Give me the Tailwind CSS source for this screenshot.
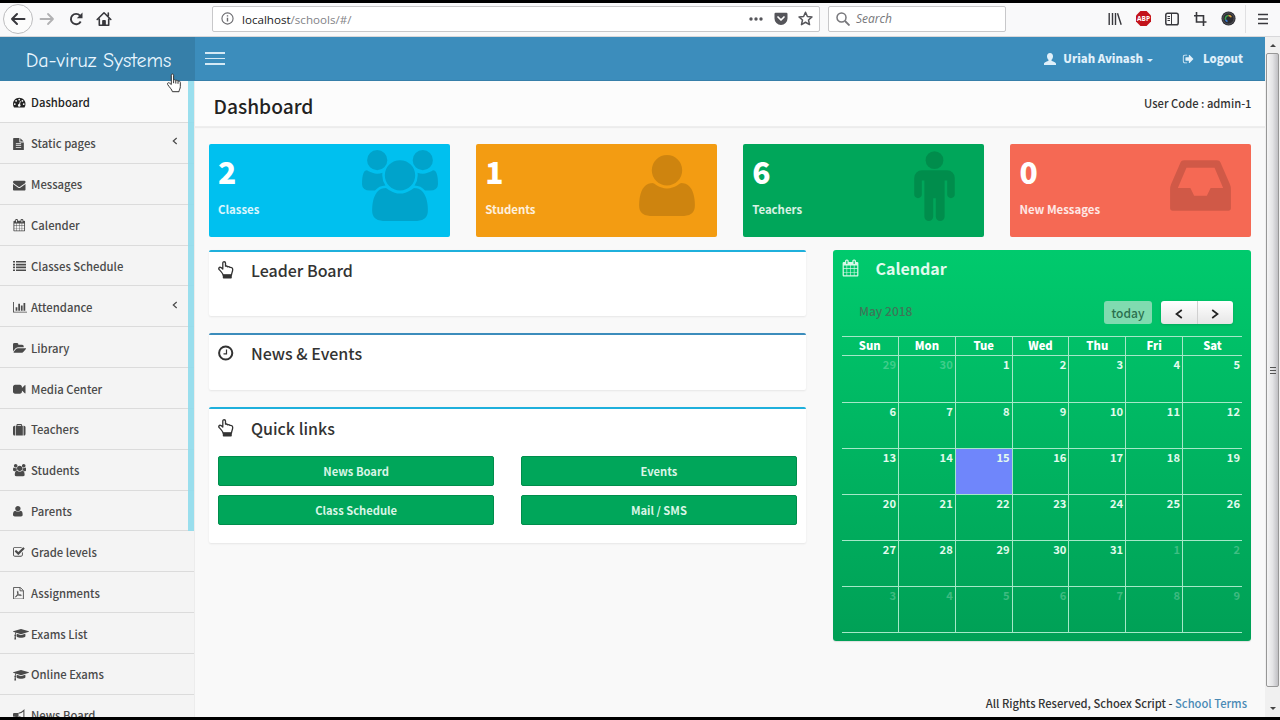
<!doctype html>
<html lang="en">
  <head>
    <meta charset="UTF-8" />
    <meta name="viewport" content="width=device-width, initial-scale=1.0" />
    <script src="https://cdn.jsdelivr.net/npm/@tailwindcss/browser@4"></script>
    <title>Da-viruz Systems | Dashboard</title>
  </head>
  <body class="bg-black">
    <!-- icons used more than once -->
    <svg class="hidden">
      <symbol id="i-calendar" viewBox="0 0 1792 1792">
        <path d="M192 1664h288v-288h-288v288zm352 0h320v-288h-320v288zm-352-352h288v-320h-288v320zm352 0h320v-320h-320v320zm-352-384h288v-288h-288v288zm736 736h320v-288h-320v288zm-384-736h320v-288h-320v288zm768 736h288v-288h-288v288zm-384-352h320v-320h-320v320zm-352-864v-288q0-13-9.5-22.5t-22.5-9.5h-64q-13 0-22.5 9.5t-9.5 22.5v288q0 13 9.5 22.5t22.5 9.5h64q13 0 22.5-9.5t9.5-22.5zm736 864h288v-320h-288v320zm-384-384h320v-288h-320v288zm384 0h288v-288h-288v288zm32-480v-288q0-13-9.5-22.5t-22.5-9.5h-64q-13 0-22.5 9.5t-9.5 22.5v288q0 13 9.5 22.5t22.5 9.5h64q13 0 22.5-9.5t9.5-22.5zm384-64v1280q0 52-38 90t-90 38h-1408q-52 0-90-38t-38-90v-1280q0-52 38-90t90-38h128v-96q0-66 47-113t113-47h64q66 0 113 47t47 113v96h384v-96q0-66 47-113t113-47h64q66 0 113 47t47 113v96h128q52 0 90 38t38 90z" />
      </symbol>
      <symbol id="i-users" viewBox="0 0 1920 1792">
        <path d="M593 896q-162 5-265 128h-134q-82 0-138-40.5t-56-118.5q0-353 124-353 6 0 43.5 21t97.5 42.5 119 21.5q67 0 133-23-5 37-5 66 0 139 81 256zm1071 637q0 120-73 189.5t-194 69.5h-874q-121 0-194-69.5t-73-189.5q0-53 3.5-103.5t14-109 26.5-108.5 43-97.5 62-81 85.5-53.5 111.5-20q10 0 43 21.5t73 48 107 48 135 21.5 135-21.5 107-48 73-48 43-21.5q61 0 111.5 20t85.5 53.5 62 81 43 97.5 26.5 108.5 14 109 3.5 103.5zm-1024-1277q0 106-75 181t-181 75-181-75-75-181 75-181 181-75 181 75 75 181zm704 384q0 159-112.5 271.5t-271.5 112.5-271.5-112.5-112.5-271.5 112.5-271.5 271.5-112.5 271.5 112.5 112.5 271.5zm576 225q0 78-56 118.5t-138 40.5h-134q-103-123-265-128 81-117 81-256 0-29-5-66 66 23 133 23 59 0 119-21.5t97.5-42.5 43.5-21q124 0 124 353zm-128-609q0 106-75 181t-181 75-181-75-75-181 75-181 181-75 181 75 75 181z" />
      </symbol>
      <symbol id="i-user" viewBox="192 0 1408 1792">
        <path d="M1600 1405q0 120-73 189.5t-194 69.5h-874q-121 0-194-69.5t-73-189.5q0-53 3.5-103.5t14-109 26.5-108.5 43-97.5 62-81 85.5-53.5 111.5-20q9 0 42 21.5t74.5 48 108 48 133.5 21.5 133.5-21.5 108-48 74.5-48 42-21.5q61 0 111.5 20t85.5 53.5 62 81 43 97.5 26.5 108.5 14 109 3.5 103.5zm-320-893q0 159-112.5 271.5t-271.5 112.5-271.5-112.5-112.5-271.5 112.5-271.5 271.5-112.5 271.5 112.5 112.5 271.5z" />
      </symbol>
      <symbol id="i-cap" viewBox="0 0 2304 1792">
        <path d="M1774 836l18 316q4 69-82 128t-235 93.5-323 34.5-323-34.5-235-93.5-82-128l18-316 574 181q22 7 48 7t48-7zm530-324q0 23-22 31l-1120 352q-4 1-10 1t-10-1l-652-206q-43 34-71 111.5t-34 178.5q63 36 63 109 0 69-58 107l58 433q2 14-8 25-9 11-24 11h-192q-15 0-24-11-10-11-8-25l58-433q-58-38-58-107 0-73 65-111 11-207 98-330l-333-104q-22-8-22-31t22-31l1120-352q4-1 10-1t10 1l1120 352q22 8 22 31z" />
      </symbol>
      <symbol id="i-hand" viewBox="0 0 16 18">
        <path d="M5 14c0-1.600-2.600-4.100-3.800-5.400C.2 7.500 1.200 6 2.500 6.300c.9.200 1.600.9 2.300 1.700V2c0-1.700 2.700-1.700 2.700 0v3.200c.8-.3 1.700-.1 2.200.6.800-.4 1.700-.2 2.200.6 1.600-.3 2.800.5 2.800 2.100 0 2.300-1.100 3.500-1.200 5.500z" fill="none" stroke="currentColor" stroke-width="1.300" stroke-linejoin="round" />
        <path d="M4.800 13.800h9v3a.8.8 0 0 1-.8.800H5.600a.8.8 0 0 1-.8-.8z" />
      </symbol>
    </svg>

    <div
      class="relative flex flex-col w-[1280px] h-[720px] border-y-3 border-black overflow-hidden bg-[#f9f9f9] font-['Noto_Sans_CJK_SC','Open_Sans',sans-serif]"
    >
      <!-- browser toolbar -->
      <div
        class="flex items-center h-[34px] shrink-0 bg-[#f9f9fa] border-b border-[#d8d8da] pb-[2px] text-[#4a4a4f] font-['Open_Sans',sans-serif]"
      >
        <div class="flex items-center justify-center w-[30px] h-[30px] ml-[3px] rounded-full border border-[#bdbdbf] bg-[#fcfcfc]">
          <svg class="w-4 h-4" viewBox="0 0 16 16" fill="none" stroke="#38383d" stroke-width="2" stroke-linecap="round" stroke-linejoin="round"><path d="M14.500 8H2M7 3L2 8l5 5" /></svg>
        </div>
        <svg class="w-4 h-4 ml-[6px]" viewBox="0 0 16 16" fill="none" stroke="#b1b1b3" stroke-width="1.800" stroke-linecap="round" stroke-linejoin="round"><path d="M1.500 8H14M9 3l5 5-5 5" /></svg>
        <svg class="w-4 h-4 ml-[13px]" viewBox="0 0 16 16" fill="none" stroke="#38383d" stroke-width="1.900"><path d="M12.700 10.500A5.200 5.200 0 1 1 12 4.600" /><path d="M14.500 1.500v5.700H8.800z" fill="#38383d" stroke="none" /></svg>
        <svg class="w-4 h-4 ml-[12px]" viewBox="0 0 16 16" fill="none" stroke="#38383d" stroke-width="1.600" stroke-linejoin="round" stroke-linecap="round"><path d="M1.200 8.500L8 1.800l6.800 6.700M3.300 8v6.200h9.400V8M12.300 2v3" /><path d="M6.700 14V9.500h2.600V14z" fill="#38383d" stroke-width="1" /></svg>

        <div class="flex items-center w-[608px] h-[26px] ml-[100px] border border-[#c8c8ca] rounded-[2px] bg-white">
          <svg class="w-[13px] h-[13px] ml-2" viewBox="0 0 14 14" fill="none" stroke="#6a6a6e" stroke-width="1.200"><circle cx="7" cy="7" r="6" /><path d="M7 6.200v4M7 3.500v1.400" stroke-width="1.500" /></svg>
          <p class="ml-[8px] pt-[2px] text-[11.600px] text-[#1c1c1e]">localhost<span class="text-[#838387]">/schools/#/</span></p>
          <svg class="w-[14px] h-1 ml-auto" viewBox="0 0 14 4" fill="#55555a"><circle cx="2" cy="2" r="1.700" /><circle cx="7" cy="2" r="1.700" /><circle cx="12" cy="2" r="1.700" /></svg>
          <svg class="w-[14px] h-[14px] ml-[11px]" viewBox="0 0 14 14"><path d="M1.600.8h10.800q1.100 0 1.100 1.100v4.600a6.500 6.500 0 0 1-13 0V1.900Q.5.800 1.600.800z" fill="#55555a" /><path d="M4 5l3 3 3-3" fill="none" stroke="#fff" stroke-width="1.700" stroke-linecap="round" stroke-linejoin="round" /></svg>
          <svg class="w-[15px] h-[15px] ml-[10px] mr-[6px]" viewBox="0 0 16 16" fill="none" stroke="#55555a" stroke-width="1.600" stroke-linejoin="round"><path d="M8 1.300l2 4.500 4.900.5-3.700 3.300 1.100 4.900L8 12l-4.300 2.500 1.100-4.900L1.100 6.300 6 5.800z" /></svg>
        </div>
        <div class="flex items-center w-[178px] h-[26px] ml-2 border border-[#c8c8ca] rounded-[2px] bg-white">
          <svg class="w-[14px] h-[14px] ml-[7px]" viewBox="0 0 14 14" fill="none" stroke="#77777b" stroke-width="1.500"><circle cx="5.500" cy="5.500" r="4.500" /><path d="M9 9l4.500 4.500" stroke-width="1.800" /></svg>
          <p class="ml-[6px] pt-px text-[12px] italic text-[#77777b]">Search</p>
        </div>

        <svg class="w-[14px] h-[14px] ml-auto" viewBox="0 0 14 14" fill="none" stroke="#38383d" stroke-width="1.400"><path d="M1.200 1v12M4.500 1v12M7.500 1v12M9.500 1.200l3.700 11.600" /></svg>
        <svg class="w-[15px] h-[15px] ml-[14px]" viewBox="0 0 16 16"><path d="M4.700 0h6.600L16 4.700v6.600L11.300 16H4.700L0 11.300V4.700z" fill="#c3131b" /><text x="8" y="10.600" font-size="7" font-weight="700" text-anchor="middle" fill="#fff">ABP</text></svg>
        <svg class="w-[14px] h-[14px] ml-[14px]" viewBox="0 0 14 14" fill="none" stroke="#38383d"><rect x=".8" y="1.300" width="12.400" height="11.400" rx="1.800" stroke-width="1.500" /><path d="M6.500 1.500v11M2.500 4.500H5M2.500 6.500H5M2.500 8.500H5" /></svg>
        <svg class="w-[14px] h-[14px] ml-[14px]" viewBox="0 0 14 14" fill="none" stroke="#38383d" stroke-width="1.600"><path d="M3.500 0v10h8M1 3.800h9.500V14M9 10h4.500" /></svg>
        <svg class="w-[15px] h-[15px] ml-[14px]" viewBox="0 0 16 16" fill="none"><circle cx="8" cy="8" r="7.500" fill="#2b2b30" /><circle cx="8" cy="8" r="6" stroke="#5a5a60" /><path d="M5 9.500A3.400 3.400 0 0 1 8 4.700" stroke="#3aa24d" stroke-width="1.600" /><path d="M8 4.700a3.400 3.400 0 0 1 3 2" stroke="#d9a13a" stroke-width="1.600" /><path d="M5 9.500a3.400 3.400 0 0 0 2 1.700" stroke="#3b7dd8" stroke-width="1.600" /></svg>
        <div class="w-px h-7 ml-[9px] bg-[#e0e0e2]"></div>
        <svg class="w-[12px] h-[12px] ml-[11px] mr-[11px]" viewBox="0 0 12 12" stroke="#38383d" stroke-width="1.600"><path d="M1 1.500h10M1 6h10M1 10.500h10" /></svg>
      </div>

      <div class="flex flex-1 min-h-0">
        <!-- page -->
        <div class="flex flex-col w-[1265px]">
          <header class="flex h-[44px] shrink-0 bg-[#3c8dbc] border-b border-[#367fa9] text-[#e0f0fa]">
            <a class="w-[195px] flex items-center justify-center bg-[#367fa9] pt-[4px] pl-[2px] text-[20px] leading-6 whitespace-nowrap font-['Comic_Sans_MS','Comic_Neue',Lato,cursive] text-[#e9f6ff]">Da-viruz Systems</a>
            <div class="flex flex-col justify-center gap-1 ml-[10px]">
              <span class="block w-5 h-[1.500px] bg-[#d5e9f5]"></span>
              <span class="block w-5 h-[1.500px] bg-[#d5e9f5]"></span>
              <span class="block w-5 h-[1.500px] bg-[#d5e9f5]"></span>
            </div>
            <nav class="flex items-center ml-auto mr-[22px] text-[11.300px] font-black">
              <svg class="w-3 h-3 mr-[7px]" viewBox="0 0 12 12" fill="currentColor"><path d="M6 0c1.900 0 3 1.300 3 3.200 0 1.500-.6 2.900-1.500 3.600v1c1 .7 4.500 1.400 4.500 3V12H0v-1.200c0-1.600 3.500-2.300 4.500-3v-1C3.600 6.100 3 4.700 3 3.200 3 1.300 4.100 0 6 0z" /></svg>
              <span>Uriah Avinash</span>
              <span class="ml-1 mt-[3px] border-x-[3.500px] border-t-[3.500px] border-x-transparent border-t-current"></span>
              <svg class="w-[12px] h-[12px] ml-[29px] mr-[9px]" viewBox="0 0 1664 1792" fill="currentColor"><path d="M704 1440q0 4 1 20t.5 26.500-3 23.500-10 19.500-20.500 6.500h-320q-119 0-203.500-84.500t-84.500-203.500v-704q0-119 84.500-203.500t203.500-84.500h320q13 0 22.500 9.500t9.500 22.500q0 4 1 20t.5 26.500-3 23.500-10 19.500-20.500 6.500h-320q-66 0-113 47t-47 113v704q0 66 47 113t113 47h312l11.500 1 11.500 3 8 5.500 7 9 2 13.500zm928-544q0 26-19 45l-544 544q-19 19-45 19t-45-19-19-45v-288h-448q-26 0-45-19t-19-45v-384q0-26 19-45t45-19h448v-288q0-26 19-45t45-19 45 19l544 544q19 19 19 45z" /></svg>
              <span>Logout</span>
            </nav>
          </header>

          <div class="flex flex-1 min-h-0">
            <!-- sidebar -->
            <aside class="relative w-[195px] shrink-0 overflow-hidden border-r border-[#ececec] bg-[#f4f4f4] text-[11.300px] font-medium text-[#4a4a4a]">
              <a class="flex items-center h-[42px] pl-[13px] pt-[2px] bg-[#fafafa] border-b border-[#dbdbdb] text-[#222]">
                <span class="w-[18px]"><svg class="w-[12.500px] h-[12.500px] fill-current" viewBox="0 0 1792 1792"><path d="M384 1152q0-53-37.500-90.500t-90.500-37.500-90.500 37.500-37.500 90.500 37.500 90.500 90.500 37.500 90.500-37.500 37.500-90.500zm192-448q0-53-37.500-90.500t-90.500-37.500-90.500 37.500-37.500 90.500 37.500 90.500 90.500 37.500 90.500-37.500 37.500-90.500zm428 481l101-382q6-26-7.500-48.500t-38.500-29.500-48 6.500-30 39.500l-101 382q-60 5-107 43.500t-63 98.500q-20 77 20 146t117 89 146-20 89-117q16-60-6-117t-72-91zm660-33q0-53-37.500-90.500t-90.500-37.500-90.500 37.500-37.500 90.500 37.500 90.500 90.500 37.500 90.500-37.500 37.500-90.500zm-640-640q0-53-37.500-90.500t-90.500-37.500-90.500 37.500-37.500 90.500 37.500 90.500 90.500 37.500 90.500-37.500 37.500-90.500zm448 192q0-53-37.500-90.500t-90.500-37.500-90.500 37.500-37.500 90.500 37.500 90.500 90.500 37.500 90.500-37.500 37.500-90.500zm320 448q0 261-141 483-19 29-54 29h-1402q-35 0-54-29-141-221-141-483 0-182 71-348t191-286 286-191 348-71 348 71 286 191 191 286 71 348z" /></svg></span>
                Dashboard
              </a>
              <a class="flex items-center h-[40.850px] pl-[13px] pt-[2px] border-b border-[#dbdbdb]">
                <span class="w-[18px]"><svg class="w-[11px] h-[12.500px] fill-current" viewBox="128 0 1536 1792"><path d="M1596 476q14 14 28 36h-472v-472q22 14 36 28zm-476 164h544v1056q0 40-28 68t-68 28h-1344q-40 0-68-28t-28-68v-1600q0-40 28-68t68-28h800v544q0 40 28 68t68 28zm160 736v-64q0-14-9-23t-23-9h-704q-14 0-23 9t-9 23v64q0 14 9 23t23 9h704q14 0 23-9t9-23zm0-256v-64q0-14-9-23t-23-9h-704q-14 0-23 9t-9 23v64q0 14 9 23t23 9h704q14 0 23-9t9-23zm0-256v-64q0-14-9-23t-23-9h-704q-14 0-23 9t-9 23v64q0 14 9 23t23 9h704q14 0 23-9t9-23z" /></svg></span>
                Static pages
                <svg class="w-[6px] h-[8px] ml-auto mr-[16px] mb-[5px]" viewBox="0 0 6 8" fill="none" stroke="currentColor" stroke-width="1.200"><path d="M4.700 1L1.300 4l3.400 3" /></svg>
              </a>
              <a class="flex items-center h-[40.850px] pl-[13px] pt-[2px] border-b border-[#dbdbdb]">
                <span class="w-[18px]"><svg class="w-[12.500px] h-[12.500px] fill-current" viewBox="0 0 1792 1792"><path d="M1792 710v794q0 66-47 113t-113 47h-1472q-66 0-113-47t-47-113v-794q44 49 101 87 362 246 497 345 57 42 92.500 65.500t94.500 48 110 24.500h2q51 0 110-24.500t94.500-48 92.500-65.500q170-123 498-345 57-39 100-87zm0-294q0 79-49 151t-122 123q-376 261-468 325-10 7-42.500 31t-54 38-52 32.500-57.500 27-50 9h-2q-23 0-50-9t-57.500-27-52-32.500-54-38-42.500-31q-91-64-262-182.500t-205-142.500q-62-42-117-115.500t-55-136.500q0-78 41.500-130t118.500-52h1472q65 0 112.500 47t47.500 113z" /></svg></span>
                Messages
              </a>
              <a class="flex items-center h-[40.850px] pl-[13px] pt-[2px] border-b border-[#dbdbdb]">
                <span class="w-[18px]"><svg class="w-[12.500px] h-[12.500px] fill-current"><use href="#i-calendar" /></svg></span>
                Calender
              </a>
              <a class="flex items-center h-[40.850px] pl-[13px] pt-[2px] border-b border-[#dbdbdb]">
                <span class="w-[18px]"><svg class="w-[13px] h-[10px] fill-current" viewBox="0 0 13 10"><path d="M0 0h2v1.600H0zM3 0h10v1.600H3zM0 2.800h2v1.600H0zM3 2.800h10v1.600H3zM0 5.600h2v1.600H0zM3 5.600h10v1.600H3zM0 8.400h2V10H0zM3 8.400h10V10H3z" /></svg></span>
                Classes Schedule
              </a>
              <a class="flex items-center h-[40.850px] pl-[13px] pt-[2px] border-b border-[#dbdbdb]">
                <span class="w-[18px]"><svg class="w-[14px] h-[12.500px] fill-current" viewBox="0 0 2048 1792"><path d="M640 896v512h-256v-512h256zm384-512v1024h-256v-1024h256zm1024 1152v128h-2048v-1536h128v1408h1920zm-640-896v768h-256v-768h256zm384-384v1152h-256v-1152h256z" /></svg></span>
                Attendance
                <svg class="w-[6px] h-[8px] ml-auto mr-[16px] mb-[5px]" viewBox="0 0 6 8" fill="none" stroke="currentColor" stroke-width="1.200"><path d="M4.700 1L1.300 4l3.400 3" /></svg>
              </a>
              <a class="flex items-center h-[40.850px] pl-[13px] pt-[2px] border-b border-[#dbdbdb]">
                <span class="w-[18px]"><svg class="w-[13.400px] h-[12.500px] fill-current" viewBox="0 0 1920 1792"><path d="M1879 952q0 31-31 66l-336 396q-43 51-120.500 86.500t-143.500 35.500h-1088q-34 0-60.500-13t-26.500-43q0-31 31-66l336-396q43-51 120.500-86.500t143.500-35.500h1088q34 0 60.500 13t26.500 43zm-343-344v160h-832q-94 0-197 47.500t-164 119.500l-337 396-5 6q0-4-.5-12.500t-.5-12.500v-960q0-92 66-158t158-66h320q92 0 158 66t66 158v32h544q92 0 158 66t66 158z" /></svg></span>
                Library
              </a>
              <a class="flex items-center h-[40.850px] pl-[13px] pt-[2px] border-b border-[#dbdbdb]">
                <span class="w-[18px]"><svg class="w-[12.500px] h-[12.500px] fill-current" viewBox="0 0 1792 1792"><path d="M1792 352v1088q0 42-39 59-13 5-25 5-27 0-45-19l-403-403v166q0 119-84.500 203.500t-203.500 84.500h-704q-119 0-203.500-84.500t-84.500-203.500v-704q0-119 84.500-203.500t203.500-84.500h704q119 0 203.500 84.500t84.500 203.500v165l403-402q18-19 45-19 12 0 25 5 39 17 39 59z" /></svg></span>
                Media Center
              </a>
              <a class="flex items-center h-[40.850px] pl-[13px] pt-[2px] border-b border-[#dbdbdb]">
                <span class="w-[18px]"><svg class="w-[12.500px] h-[12.500px] fill-current" viewBox="0 0 1792 1792"><path d="M640 256h512v-128h-512v128zm-352 0v1408h-64q-92 0-158-66t-66-158v-960q0-92 66-158t158-66h64zm1120 0v1408h-1024v-1408h128v-160q0-40 28-68t68-28h576q40 0 68 28t28 68v160h128zm384 224v960q0 92-66 158t-158 66h-64v-1408h64q92 0 158 66t66 158z" /></svg></span>
                Teachers
              </a>
              <a class="flex items-center h-[40.850px] pl-[13px] pt-[2px] border-b border-[#dbdbdb]">
                <span class="w-[18px]"><svg class="w-[13.400px] h-[12.500px] fill-current"><use href="#i-users" /></svg></span>
                Students
              </a>
              <a class="flex items-center h-[40.850px] pl-[13px] pt-[2px] border-b border-[#dbdbdb]">
                <span class="w-[18px]"><svg class="w-[9.800px] h-[12.500px] fill-current"><use href="#i-user" /></svg></span>
                Parents
              </a>
              <a class="flex items-center h-[40.850px] pl-[13px] pt-[2px] border-b border-[#dbdbdb]">
                <span class="w-[18px]"><svg class="w-[12.500px] h-[12.500px] fill-current" viewBox="64 0 1792 1792"><path d="M1472 930v318q0 119-84.500 203.500t-203.500 84.500h-832q-119 0-203.500-84.500t-84.500-203.500v-832q0-119 84.500-203.500t203.500-84.500h832q63 0 117 25 15 7 18 23 3 17-9 29l-49 49q-10 10-23 10-3 0-9-2-23-6-45-6h-832q-66 0-113 47t-47 113v832q0 66 47 113t113 47h832q66 0 113-47t47-113v-254q0-13 9-22l64-64q10-10 23-10 6 0 12 3 20 8 20 29zm231-489l-814 814q-24 24-57 24t-57-24l-430-430q-24-24-24-57t24-57l110-110q24-24 57-24t57 24l263 263 647-647q24-24 57-24t57 24l110 110q24 24 24 57t-24 57z" /></svg></span>
                Grade levels
              </a>
              <a class="flex items-center h-[40.850px] pl-[13px] pt-[2px] border-b border-[#dbdbdb]">
                <span class="w-[18px]"><svg class="w-[11px] h-[12.500px]" viewBox="0 0 12 14" fill="none" stroke="currentColor" stroke-linejoin="round"><path d="M.5.500h7.500l3.500 3.500v9.500H.5zM7.700.700v3.600h3.600" /><path d="M2.500 11.300c1.500-.7 3-3.600 3-6 0-.8-.9-.8-.8.1.2 2 1.800 4 3.600 4.200 1.300.1 1.300-.9 0-.9-2.200 0-4.800 1-5.800 2.600z" /></svg></span>
                Assignments
              </a>
              <a class="flex items-center h-[40.850px] pl-[13px] pt-[2px] border-b border-[#dbdbdb]">
                <span class="w-[18px]"><svg class="w-[16px] h-[12.500px] fill-current"><use href="#i-cap" /></svg></span>
                Exams List
              </a>
              <a class="flex items-center h-[40.850px] pl-[13px] pt-[2px] border-b border-[#dbdbdb]">
                <span class="w-[18px]"><svg class="w-[16px] h-[12.500px] fill-current"><use href="#i-cap" /></svg></span>
                Online Exams
              </a>
              <a class="flex items-center h-[40.850px] pl-[13px]">
                <span class="w-[18px]"><svg class="w-[12.500px] h-[12.500px]" viewBox="0 0 14 14"><path d="M1.200 4.500h5v4.300h-1c-.3 1.300.4 2 .6 3.400-.8 1-2.300.7-2.800.3-.3-1.300-.8-2.300-.3-3.700H1.200Q0 8.800 0 7.700V5.600q0-1.100 1.200-1.100z" fill="currentColor" /><path d="M6.200 4.700C8.800 4.500 11 3 12.200 1.600v10.200C11 10.400 8.800 8.900 6.200 8.700" fill="none" stroke="currentColor" stroke-width="1.200" /></svg></span>
                News Board
              </a>
              <!-- slim scroll rail -->
              <div class="absolute top-0 right-0 w-[6px] h-[450px] bg-[#8fdcec]/90"></div>
            </aside>

            <!-- main content -->
            <main class="flex-1 flex flex-col bg-[#f9f9f9] text-[#333]">
              <div class="flex justify-between h-[46px] bg-[#fcfcfc] border-b border-[#eee] shadow-[0_1px_1px_rgba(0,0,0,0.05)] pl-[18.500px] pr-[13.500px] shrink-0">
                <h1 class="mt-[11px] text-[19.200px] leading-[28px] font-medium text-[#222]">Dashboard</h1>
                <p class="mt-[13px] text-[11.200px] leading-[18px] font-medium">User Code : admin-1</p>
              </div>

              <div class="grid grid-cols-4 gap-[26.500px] pl-[14px] pr-[14px] mt-[17px]">
                <div class="flex justify-between h-[93px] rounded-[2px] bg-[#00c0ef] pl-[9px] pr-[12px] text-white">
                  <div>
                    <h3 class="mt-[9px] text-[30px] leading-[36px] font-black">2</h3>
                    <p class="mt-[11px] text-[11.400px] leading-[18px] font-bold text-white/85">Classes</p>
                  </div>
                  <svg class="w-[76px] h-[71px] mt-[6px] fill-black/15"><use href="#i-users" /></svg>
                </div>
                <div class="flex justify-between h-[93px] rounded-[2px] bg-[#f39c12] pl-[9px] pr-[22px] text-white">
                  <div>
                    <h3 class="mt-[9px] text-[30px] leading-[36px] font-black">1</h3>
                    <p class="mt-[11px] text-[11.400px] leading-[18px] font-bold text-white/85">Students</p>
                  </div>
                  <svg class="w-[56px] h-[71px] mt-[6px] fill-black/15"><use href="#i-user" /></svg>
                </div>
                <div class="flex justify-between h-[93px] rounded-[2px] bg-[#00a65a] pl-[9px] pr-[29px] text-white">
                  <div>
                    <h3 class="mt-[9px] text-[30px] leading-[36px] font-black">6</h3>
                    <p class="mt-[11px] text-[11.400px] leading-[18px] font-bold text-white/85">Teachers</p>
                  </div>
                  <svg class="w-[41px] h-[71px] mt-[6px] fill-black/15" viewBox="384 0 1024 1792"><path d="M1408 704v416q0 40-28 68t-68 28-68-28-28-68v-352h-64v912q0 46-33 79t-79 33-79-33-33-79v-464h-64v464q0 46-33 79t-79 33-79-33-33-79v-912h-64v352q0 40-28 68t-68 28-68-28-28-68v-416q0-80 56-136t136-56h640q80 0 136 56t56 136z" /><circle cx="896" cy="256" r="224" /></svg>
                </div>
                <div class="flex justify-between h-[93px] rounded-[2px] bg-[#f56954] pl-[9px] pr-[20px] text-white">
                  <div>
                    <h3 class="mt-[9px] text-[30px] leading-[36px] font-black">0</h3>
                    <p class="mt-[11px] text-[11.400px] leading-[18px] font-bold text-white/85">New Messages</p>
                  </div>
                  <svg class="w-[61px] h-[71px] mt-[6px] fill-black/15" viewBox="128 0 1536 1792"><path d="M1151 960h316q-1-3-2.500-8.500t-2.500-7.500l-212-496h-708l-212 496q-1 3-2.500 8.500t-2.500 7.500h316l95 192h320zm513 30v482q0 26-19 45t-45 19h-1408q-26 0-45-19t-19-45v-482q0-62 25-123l238-552q10-25 36.500-42t52.500-17h832q26 0 52.500 17t36.500 42l238 552q25 61 25 123z" /></svg>
                </div>
              </div>

              <div class="flex items-start gap-[26.500px] pl-[14px] pr-[14px] mt-[13px]">
                <div class="w-[597px] text-[#333]">
                  <section class="h-[66px] rounded-[2px] bg-white border-t-2 border-[#1fb0dc] shadow-[0_1px_2px_rgba(0,0,0,0.08)]">
                    <div class="flex items-start pl-[9px]">
                      <svg class="w-4 h-[18px] mt-[9px] fill-current"><use href="#i-hand" /></svg>
                      <h3 class="ml-[17px] mt-[5px] text-[16px] leading-[26px] font-medium">Leader Board</h3>
                    </div>
                  </section>
                  <section class="h-[57px] mt-[17px] rounded-[2px] bg-white border-t-2 border-[#3c8dbc] shadow-[0_1px_2px_rgba(0,0,0,0.08)]">
                    <div class="flex items-start pl-[9px]">
                      <svg class="w-4 h-4 mt-[10px]" viewBox="0 0 16 16" fill="none" stroke="currentColor"><circle cx="7.700" cy="8" r="6.600" stroke-width="2" /><path d="M8.500 4.500v4.300H5.500" stroke-width="1.200" /></svg>
                      <h3 class="ml-[17px] mt-[5px] text-[16px] leading-[26px] font-medium">News &amp; Events</h3>
                    </div>
                  </section>
                  <section class="h-[136px] mt-[17px] rounded-[2px] bg-white border-t-2 border-[#1fb0dc] shadow-[0_1px_2px_rgba(0,0,0,0.08)]">
                    <div class="flex items-start pl-[9px]">
                      <svg class="w-4 h-[18px] mt-[10px] fill-current"><use href="#i-hand" /></svg>
                      <h3 class="ml-[17px] mt-[6px] text-[16px] leading-[26px] font-medium">Quick links</h3>
                    </div>
                    <div class="grid grid-cols-2 gap-x-[26.500px] gap-y-[9px] px-[9px] mt-[15px] text-[11.200px] font-bold text-[#d9f5e6]">
                      <a class="flex items-center justify-center h-[30px] pt-px rounded-[2px] bg-[#00a65a] border border-[#008d4c]">News Board</a>
                      <a class="flex items-center justify-center h-[30px] pt-px rounded-[2px] bg-[#00a65a] border border-[#008d4c]">Events</a>
                      <a class="flex items-center justify-center h-[30px] pt-px rounded-[2px] bg-[#00a65a] border border-[#008d4c]">Class Schedule</a>
                      <a class="flex items-center justify-center h-[30px] pt-px rounded-[2px] bg-[#00a65a] border border-[#008d4c]">Mail / SMS</a>
                    </div>
                  </section>
                </div>

                <!-- calendar -->
                <section class="flex-1 h-[391px] rounded-[3px] bg-linear-to-b from-[#00ca6d] to-[#00a056] px-[9px] text-white shadow-[0_1px_1px_rgba(0,0,0,0.1)]">
                  <div class="flex items-start h-[50px]">
                    <svg class="w-[17px] h-[18px] mt-[9px] fill-[#d9f8e8]"><use href="#i-calendar" /></svg>
                    <h3 class="ml-[17px] mt-[5px] text-[16px] leading-[26px] font-bold text-[#e2faee]">Calendar</h3>
                  </div>
                  <div class="flex items-start h-[36px] pl-[17.500px] pr-[9px]">
                    <h2 class="mt-[2px] text-[12px] leading-[18px] font-medium text-[#3f7558]">May 2018</h2>
                    <div class="flex items-center justify-center w-[48px] h-[23px] ml-auto mt-[1px] rounded-[3px] bg-[#80dbb0] text-[12px] font-medium text-[#2b6f4e]">today</div>
                    <div class="flex w-[72px] h-[23px] ml-[9px] mt-[1px] rounded-[3px] bg-linear-to-b from-white to-[#e6e6e6] shadow-sm">
                      <span class="flex-1 flex items-center justify-center pt-[2px] border-r border-[#d0d0d0]"><svg class="w-[8px] h-[10px]" viewBox="0 0 8 10" fill="none" stroke="#222" stroke-width="1.700"><path d="M6.800 1L1.500 5l5.300 4" /></svg></span>
                      <span class="flex-1 flex items-center justify-center pt-[2px]"><svg class="w-[8px] h-[10px]" viewBox="0 0 8 10" fill="none" stroke="#222" stroke-width="1.700"><path d="M1.200 1l5.300 4-5.300 4" /></svg></span>
                    </div>
                  </div>
                  <div class="grid grid-cols-[57.5px_repeat(5,56.8px)_1fr] border-t border-[#a5e8c8] text-[11.200px] leading-[17px] font-black text-center" id="week-days"></div>
                  <div class="grid grid-cols-[57.5px_repeat(5,56.8px)_1fr] border-b border-[#a5e8c8] text-[11.200px] leading-[17px] font-bold text-right" id="month-days"></div>
                </section>
              </div>

              <footer class="mt-auto mb-[5px] pr-[18px] text-right text-[11.200px] leading-[18px] font-medium">
                All Rights Reserved, Schoex Script - <a class="text-[#4a8ab5]">School Terms</a>
              </footer>
            </main>
          </div>
        </div>

        <!-- page scrollbar -->
        <div class="flex flex-col items-center w-[15px] bg-[#f0f0f0]">
          <div class="flex items-center justify-center h-[16px]">
            <span class="border-x-[3px] border-b-[3px] border-x-transparent border-b-[#444]"></span>
          </div>
          <div class="flex flex-col items-center justify-center gap-px w-[13px] h-[634px] border border-[#979797] rounded-[2px] bg-linear-to-r from-[#f5f5f5] via-[#e4e4e6] to-[#c0c0c4]">
            <span class="block w-[6px] h-px bg-[#555]"></span>
            <span class="block w-[6px] h-px mt-px bg-[#555]"></span>
            <span class="block w-[6px] h-px mt-px bg-[#555]"></span>
          </div>
          <div class="flex items-center justify-center flex-1 pt-3">
            <span class="border-x-[3px] border-t-[3px] border-x-transparent border-t-[#444]"></span>
          </div>
        </div>
      </div>

      <!-- mouse pointer -->
      <svg class="absolute left-[166px] top-[70px] w-[17px] h-[20px]" viewBox="0 0 17 20">
        <path d="M5.300 11.500V2.200c0-1.600 2.300-1.600 2.300 0v5c.6-.7 2-.5 2.200.4.700-.6 2-.3 2.200.6.900-.5 2.300 0 2.300 1.300v4.200c0 2-1.100 2.800-1.300 5H6.400C6 16.500 3.200 14 1.700 11.600c-.8-1.500.7-2.400 1.800-1.500z" fill="#fff" stroke="#333" stroke-linejoin="round" />
        <path d="M7.600 7.200v3M9.800 7.600v3M12 8.200v2.600" stroke="#333" />
      </svg>
    </div>

    <script>
      const weekDays = document.getElementById("week-days");
      const monthDays = document.getElementById("month-days");

      ["Sun", "Mon", "Tue", "Wed", "Thu", "Fri", "Sat"].forEach((day, i) => {
        const line = i < 6 ? "border-r border-[#a5e8c8]" : "";
        weekDays.innerHTML += `<div class="h-[18px] ${line}">${day}</div>`;
      });

      // first cell is Sunday, April 29
      for (let i = 0; i < 42; i++) {
        const date = new Date(2018, 3, 29 + i);
        const line = i % 7 < 6 ? "border-r" : "";
        const height = i < 7 ? "h-[47px]" : "h-[46.100px]";
        const color = date.getMonth() === 4 ? "text-[#e2faee]" : "text-white/25";
        const today = i === 16 ? "bg-[#6f86fb]" : "";
        monthDays.innerHTML += `<div class="border-t border-[#a5e8c8] pr-[2px] ${height} ${line} ${today}"><span class="${color}">${date.getDate()}</span></div>`;
      }
    </script>
  </body>
</html>
